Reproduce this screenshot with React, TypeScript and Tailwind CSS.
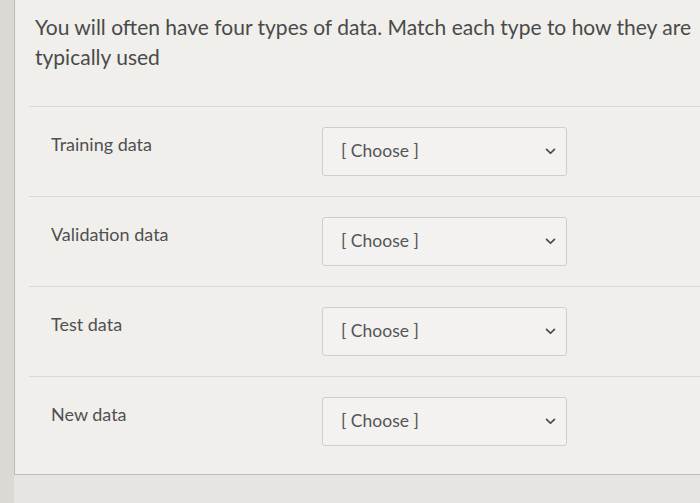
import React from "react";

const rows = ["Training data", "Validation data", "Test data", "New data"];

function Chevron() {
  return (
    <svg width="11" height="7" viewBox="0 0 12 8" fill="none" className="shrink-0">
      <path d="M1.5 1.5 L6 6 L10.5 1.5" stroke="#4a4a4a" strokeWidth="2" strokeLinecap="round" strokeLinejoin="round" />
    </svg>
  );
}

function MatchRow({ label, last }: { label: string; last: boolean }) {
  return (
    <div className={`flex items-start pt-[20px] ${last ? "pb-[38px]" : "pb-[20px] border-b border-[#d9d8d5]"}`}>
      <div className="w-[293px] pl-[22px] pt-[5px] text-[18px] leading-[24px] text-[#505050]">{label}</div>
      <div className="w-[245px] h-[49px] flex items-center justify-between pl-[18px] pr-[10px] border border-[#cfcecb] rounded-[3px] bg-[#f3f2f0]">
        <span className="text-[17.5px] text-[#555555]">[ Choose ]</span>
        <Chevron />
      </div>
    </div>
  );
}

export default function App() {
  return (
    <div
      className="w-[700px] h-[503px] overflow-hidden bg-[#e7e5e1] flex"
      style={{ fontFamily: "Lato, 'Open Sans', sans-serif" }}
    >
      <div className="w-[14px] shrink-0 bg-[#dcd9d4]" />
      <div className="w-[760px] shrink-0 h-[475px] border-l border-b border-[#bdbbb7] bg-[#f0efec] pl-[14px]">
        <p className="pt-[12px] pl-[6px] pr-[60px] text-[21px] leading-[30px] text-[#4a4a4a]">
          You will often have four types of data. Match each type to how they are typically used
        </p>
        <div className="mt-[34px] border-t border-[#d9d8d5]">
          {rows.map((r, i) => (
            <MatchRow key={r} label={r} last={i === rows.length - 1} />
          ))}
        </div>
      </div>
    </div>
  );
}
